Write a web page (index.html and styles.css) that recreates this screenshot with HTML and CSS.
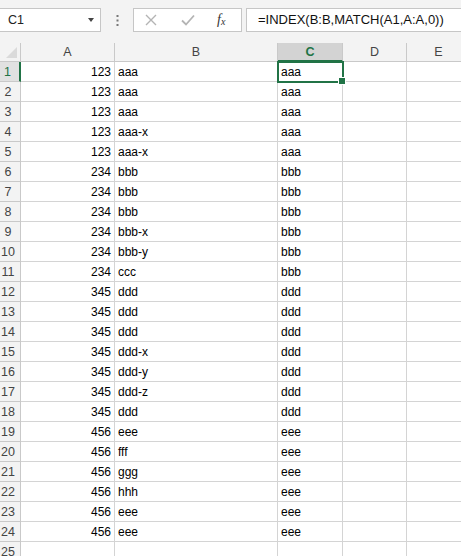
FILE: index.html
```html
<!DOCTYPE html>
<html lang="en">
<head>
  <meta charset="UTF-8" />
  <title>Book1 - Excel</title>
  <link rel="stylesheet" href="styles.css">
</head>
<body>
  <div class="topbar">
    <div class="namebox">
      <span>C1</span>
      <span class="arrow"></span>
    </div>
    <div class="grip">
      <svg width="3" height="11" viewBox="0 0 3 11"><rect x="0.5" y="0" width="2" height="2" fill="#777"/><rect x="0.5" y="4.5" width="2" height="2" fill="#777"/><rect x="0.5" y="9" width="2" height="2" fill="#777"/></svg>
    </div>
    <div class="fxbuttons">
      <svg class="btn-x" width="12" height="12" viewBox="0 0 12 12"><path d="M1 1 L11 11 M11 1 L1 11" stroke="#b4b4b4" stroke-width="1.4" fill="none"/></svg>
      <svg class="btn-ok" width="14" height="12" viewBox="0 0 14 12"><path d="M1 6.5 L5 10.5 L13 1.5" stroke="#b4b4b4" stroke-width="1.8" fill="none"/></svg>
      <span class="fx">f<sub>x</sub></span>
    </div>
    <div class="formula">=INDEX(B:B,MATCH(A1,A:A,0))</div>
  </div>

  <table class="sheet">
    <colgroup>
      <col class="c-head">
      <col class="c-a">
      <col class="c-b">
      <col class="c-c">
      <col class="c-d">
      <col class="c-e">
    </colgroup>
    <thead>
      <tr>
        <th class="corner"><span class="tri"></span></th>
        <th>A</th>
        <th>B</th>
        <th class="sel">C</th>
        <th>D</th>
        <th>E</th>
      </tr>
    </thead>
    <tbody>
      <tr><th class="sel">1</th><td class="num">123</td><td>aaa</td><td class="active">aaa</td><td></td><td></td></tr>
      <tr><th>2</th><td class="num">123</td><td>aaa</td><td>aaa</td><td></td><td></td></tr>
      <tr><th>3</th><td class="num">123</td><td>aaa</td><td>aaa</td><td></td><td></td></tr>
      <tr><th>4</th><td class="num">123</td><td>aaa-x</td><td>aaa</td><td></td><td></td></tr>
      <tr><th>5</th><td class="num">123</td><td>aaa-x</td><td>aaa</td><td></td><td></td></tr>
      <tr><th>6</th><td class="num">234</td><td>bbb</td><td>bbb</td><td></td><td></td></tr>
      <tr><th>7</th><td class="num">234</td><td>bbb</td><td>bbb</td><td></td><td></td></tr>
      <tr><th>8</th><td class="num">234</td><td>bbb</td><td>bbb</td><td></td><td></td></tr>
      <tr><th>9</th><td class="num">234</td><td>bbb-x</td><td>bbb</td><td></td><td></td></tr>
      <tr><th>10</th><td class="num">234</td><td>bbb-y</td><td>bbb</td><td></td><td></td></tr>
      <tr><th>11</th><td class="num">234</td><td>ccc</td><td>bbb</td><td></td><td></td></tr>
      <tr><th>12</th><td class="num">345</td><td>ddd</td><td>ddd</td><td></td><td></td></tr>
      <tr><th>13</th><td class="num">345</td><td>ddd</td><td>ddd</td><td></td><td></td></tr>
      <tr><th>14</th><td class="num">345</td><td>ddd</td><td>ddd</td><td></td><td></td></tr>
      <tr><th>15</th><td class="num">345</td><td>ddd-x</td><td>ddd</td><td></td><td></td></tr>
      <tr><th>16</th><td class="num">345</td><td>ddd-y</td><td>ddd</td><td></td><td></td></tr>
      <tr><th>17</th><td class="num">345</td><td>ddd-z</td><td>ddd</td><td></td><td></td></tr>
      <tr><th>18</th><td class="num">345</td><td>ddd</td><td>ddd</td><td></td><td></td></tr>
      <tr><th>19</th><td class="num">456</td><td>eee</td><td>eee</td><td></td><td></td></tr>
      <tr><th>20</th><td class="num">456</td><td>fff</td><td>eee</td><td></td><td></td></tr>
      <tr><th>21</th><td class="num">456</td><td>ggg</td><td>eee</td><td></td><td></td></tr>
      <tr><th>22</th><td class="num">456</td><td>hhh</td><td>eee</td><td></td><td></td></tr>
      <tr><th>23</th><td class="num">456</td><td>eee</td><td>eee</td><td></td><td></td></tr>
      <tr><th>24</th><td class="num">456</td><td>eee</td><td>eee</td><td></td><td></td></tr>
      <tr><th>25</th><td class="num"></td><td></td><td></td><td></td><td></td></tr>
    </tbody>
  </table>
</body>
</html>
```

FILE: styles.css
```css
* {
  box-sizing: border-box;
}

body {
  margin: 0;
  overflow: hidden;
  background: #fff;
  font-family: "Liberation Sans", Arial, sans-serif;
  color: #000;
}

.topbar {
  height: 43px;
  background: #f3f3f3;
  display: flex;
  align-items: flex-start;
  padding-top: 8px;
}

.namebox {
  width: 101px;
  height: 24px;
  background: #fff;
  border: 1px solid #c6c6c6;
  border-left: none;
  display: flex;
  align-items: center;
  justify-content: space-between;
  padding: 0 6px 0 8px;
  font-size: 12.5px;
  color: #222;
}

.arrow {
  width: 0;
  height: 0;
  border-left: 3.5px solid transparent;
  border-right: 3.5px solid transparent;
  border-top: 4px solid #444;
}

.grip {
  width: 32px;
  height: 24px;
  display: flex;
  align-items: center;
  justify-content: center;
}

.fxbuttons {
  width: 109px;
  height: 24px;
  background: #fff;
  border: 1px solid #c6c6c6;
  display: flex;
  align-items: center;
  padding-left: 11px;
}

.btn-x {
  margin-right: 24px;
}

.btn-ok {
  margin-right: 22px;
}

.fx {
  font-family: "Liberation Serif", serif;
  font-style: italic;
  font-size: 14px;
  color: #333;
}

.fx sub {
  font-size: 10px;
  vertical-align: 0;
  position: relative;
  top: 1px;
}

.formula {
  flex: 1;
  height: 24px;
  margin-left: 4px;
  background: #fff;
  border: 1px solid #c6c6c6;
  border-right: none;
  padding-left: 11px;
  font-size: 13px;
  line-height: 22px;
  color: #111;
  white-space: nowrap;
}

.sheet {
  border-collapse: separate;
  border-spacing: 0;
  table-layout: fixed;
  width: 471px;
  font-size: 12px;
}

.c-head { width: 21px; }
.c-a { width: 94px; }
.c-b { width: 163px; }
.c-c { width: 65px; }
.c-d { width: 64px; }
.c-e { width: 64px; }

th, td {
  border-right: 1px solid #d4d4d4;
  border-bottom: 1px solid #d4d4d4;
  height: 20px;
  padding: 0 3px 2px 3px;
  vertical-align: bottom;
  white-space: nowrap;
  overflow: visible;
}

thead th {
  height: 19px;
  background: #f3f3f3;
  border-color: #c9c9c9;
  font-weight: normal;
  color: #444;
  font-size: 12.5px;
  text-align: center;
  vertical-align: middle;
  padding: 0;
}

thead th.sel {
  background: #d3d3d3;
  color: #217346;
  font-weight: bold;
  border-bottom: 2px solid #217346;
}

.corner {
  position: relative;
}

.tri {
  position: absolute;
  right: 3px;
  bottom: 3px;
  width: 0;
  height: 0;
  border-left: 11px solid transparent;
  border-bottom: 11px solid #dadada;
}

tbody th {
  background: #f3f3f3;
  border-color: #c9c9c9;
  font-weight: normal;
  color: #444;
  font-size: 12.5px;
  text-align: center;
  padding: 0 4px 2px 0;
}

tbody th.sel {
  background: #e1e1e1;
  color: #217346;
  border-right: 2px solid #217346;
}

td.num {
  text-align: right;
}

td.active {
  position: relative;
  outline: 2px solid #217346;
  outline-offset: -1px;
}

td.active::after {
  content: "";
  position: absolute;
  right: -4px;
  bottom: -4px;
  width: 6px;
  height: 6px;
  background: #217346;
  border: 1px solid #fff;
  z-index: 2;
}
```
